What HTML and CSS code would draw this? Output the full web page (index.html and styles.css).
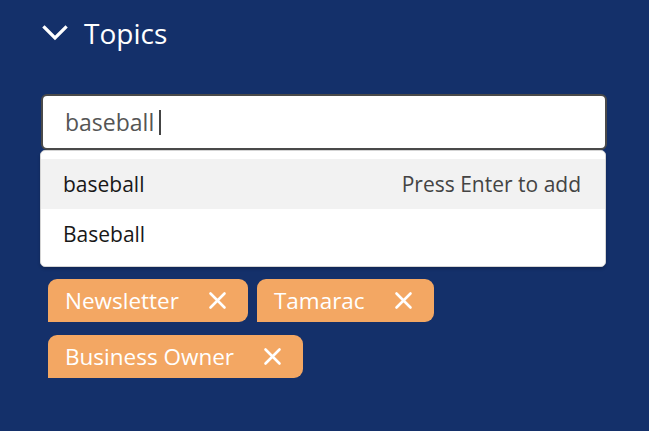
FILE: index.html
```html
<!DOCTYPE html>
<html>
<head>
<meta charset="utf-8">
<link rel="stylesheet" href="styles.css">
</head>
<body>
<div class="panel">
  <div class="header">
    <svg class="chevron" width="26" height="16" viewBox="0 0 26 16"><path d="M2.5 2.5 L13 13 L23.5 2.5" fill="none" stroke="#fff" stroke-width="3.2" stroke-linecap="square"/></svg>
    <span class="title">Topics</span>
  </div>
  <div class="combo">
    <div class="input"><span class="value">baseball</span><span class="caret"></span></div>
    <div class="menu">
      <div class="option active"><span>baseball</span><span class="hint">Press Enter to add</span></div>
      <div class="option"><span>Baseball</span></div>
    </div>
  </div>
  <div class="tags">
    <div class="tag"><span>Newsletter</span><svg class="x" width="19" height="19" viewBox="0 0 19 19"><path d="M2.5 2.5 L16.5 16.5 M16.5 2.5 L2.5 16.5" stroke="#fff" stroke-width="2.6" stroke-linecap="round"/></svg></div>
    <div class="tag"><span>Tamarac</span><svg class="x" width="19" height="19" viewBox="0 0 19 19"><path d="M2.5 2.5 L16.5 16.5 M16.5 2.5 L2.5 16.5" stroke="#fff" stroke-width="2.6" stroke-linecap="round"/></svg></div>
    <div class="tag"><span>Business Owner</span><svg class="x" width="19" height="19" viewBox="0 0 19 19"><path d="M2.5 2.5 L16.5 16.5 M16.5 2.5 L2.5 16.5" stroke="#fff" stroke-width="2.6" stroke-linecap="round"/></svg></div>
  </div>
</div>
</body>
</html>
```

FILE: styles.css
```css
html, body {
  margin: 0;
  padding: 0;
  background: #14306a;
  height: 100%;
}
body {
  font-family: "Open Sans", "Noto Sans", sans-serif;
  overflow: hidden;
}
.panel {
  padding: 16px 42px 0 40px;
}
.header {
  display: flex;
  align-items: center;
  gap: 16px;
  height: 34px;
  margin-left: 2px;
}
.chevron {
  display: block;
}
.title {
  color: #fff;
  font-size: 28px;
  line-height: 34px;
}
.combo {
  margin-top: 44px;
  width: 567px;
}
.input {
  box-sizing: border-box;
  height: 56px;
  margin-left: 1px;
  background: #fff;
  border: 2px solid #4a4a4a;
  border-radius: 6px;
  display: flex;
  align-items: center;
  padding-left: 22px;
}
.value {
  font-size: 23px;
  color: #555;
}
.caret {
  width: 2px;
  height: 25px;
  background: #444;
  margin-left: 5px;
}
.menu {
  box-sizing: border-box;
  width: 566px;
  background: #fff;
  border: 1px solid #d4d4d4;
  border-radius: 5px;
  padding: 8px 0 7px;
  box-shadow: 0 2px 3px rgba(0,0,0,0.2);
}
.option {
  display: flex;
  justify-content: space-between;
  align-items: center;
  height: 50px;
  padding: 0 24px 0 22px;
  font-size: 21px;
  color: #181818;
}
.option.active {
  background: #f2f2f2;
}
.hint {
  color: #444;
  font-size: 21px;
}
.tags {
  display: flex;
  flex-wrap: wrap;
  gap: 13px 9px;
  margin-top: 12px;
  margin-left: 8px;
  width: 500px;
}
.tag {
  display: flex;
  align-items: center;
  height: 43px;
  padding: 0 21px 0 17px;
  gap: 29px;
  background: #f3a763;
  border-radius: 9px 9px 9px 0;
  color: #fff;
  font-size: 22.5px;
}
.x {
  display: block;
}
```
